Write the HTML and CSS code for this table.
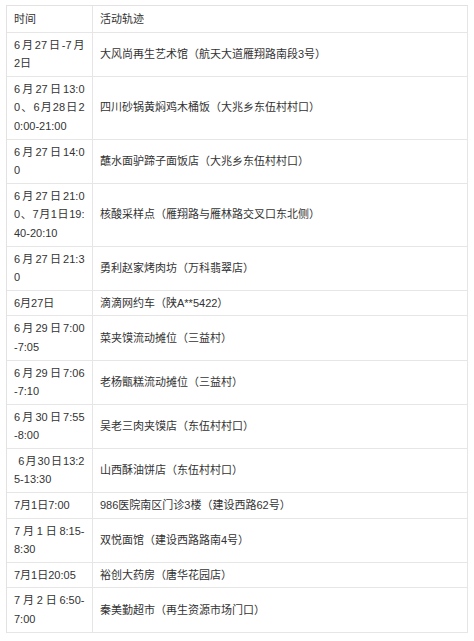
FILE: index.html
```html
<!DOCTYPE html>
<html lang="zh-CN">
<head>
<meta charset="utf-8">
<title>活动轨迹</title>
<link rel="stylesheet" href="styles.css">
</head>
<body>
<div class="trace">
  <div class="cell time head"><span class="ln">时间</span></div>
  <div class="cell place head">活动轨迹</div>

  <div class="cell time"><span class="ln fill">6月27日-7月</span><span class="ln">2日</span></div>
  <div class="cell place">大风尚再生艺术馆（航天大道雁翔路南段3号）</div>

  <div class="cell time"><span class="ln fill">6月27日13:0</span><span class="ln fill">0、6月28日2</span><span class="ln">0:00-21:00</span></div>
  <div class="cell place">四川砂锅黄焖鸡木桶饭（大兆乡东伍村村口）</div>

  <div class="cell time"><span class="ln fill">6月27日14:0</span><span class="ln">0</span></div>
  <div class="cell place">蘸水面驴蹄子面饭店（大兆乡东伍村村口）</div>

  <div class="cell time"><span class="ln fill">6月27日21:0</span><span class="ln fill">0、7月1日19:</span><span class="ln">40-20:10</span></div>
  <div class="cell place">核酸采样点（雁翔路与雁林路交叉口东北侧）</div>

  <div class="cell time"><span class="ln fill">6月27日21:3</span><span class="ln">0</span></div>
  <div class="cell place">勇利赵家烤肉坊（万科翡翠店）</div>

  <div class="cell time"><span class="ln">6月27日</span></div>
  <div class="cell place">滴滴网约车（陕A**5422）</div>

  <div class="cell time"><span class="ln fill">6月29日7:00</span><span class="ln">-7:05</span></div>
  <div class="cell place">菜夹馍流动摊位（三益村）</div>

  <div class="cell time"><span class="ln fill">6月29日7:06</span><span class="ln">-7:10</span></div>
  <div class="cell place">老杨甑糕流动摊位（三益村）</div>

  <div class="cell time"><span class="ln fill">6月30日7:55</span><span class="ln">-8:00</span></div>
  <div class="cell place">吴老三肉夹馍店（东伍村村口）</div>

  <div class="cell time"><span class="ln fill">&nbsp;6月30日13:2</span><span class="ln">5-13:30</span></div>
  <div class="cell place">山西酥油饼店（东伍村村口）</div>

  <div class="cell time"><span class="ln">7月1日7:00</span></div>
  <div class="cell place">986医院南区门诊3楼（建设西路62号）</div>

  <div class="cell time"><span class="ln fill">7月1日8:15-</span><span class="ln">8:30</span></div>
  <div class="cell place">双悦面馆（建设西路路南4号）</div>

  <div class="cell time"><span class="ln">7月1日20:05</span></div>
  <div class="cell place">裕创大药房（唐华花园店）</div>

  <div class="cell time"><span class="ln fill">7月2日6:50-</span><span class="ln">7:00</span></div>
  <div class="cell place">秦美勤超市（再生资源市场门口）</div>
</div>
</body>
</html>
```
FILE: styles.css
```css
html, body {
  margin: 0;
  padding: 0;
  background: #ffffff;
}

body {
  padding: 5px 0 0 6px;
  font-family: "Liberation Sans", "Noto Sans CJK SC", sans-serif;
  font-size: 11px;
  color: #333333;
  text-spacing-trim: space-all;
}

.trace {
  box-sizing: border-box;
  width: 462px;
  display: grid;
  grid-template-columns: 86px 375px;
  border-top: 1px solid #e2e2e2;
  border-left: 1px solid #e2e2e2;
}

.cell {
  box-sizing: border-box;
  display: flex;
  flex-direction: column;
  justify-content: center;
  padding: 3px 7px;
  line-height: 18.6px;
  border-right: 1px solid #e6e6e6;
  border-bottom: 1px solid #e6e6e6;
  white-space: nowrap;
}

.head {
  padding-top: 4px;
  padding-bottom: 3px;
}

.time {
  padding-right: 7.5px;
}

.ln {
  display: block;
}

.ln.fill {
  text-align: justify;
  text-align-last: justify;
}
```
